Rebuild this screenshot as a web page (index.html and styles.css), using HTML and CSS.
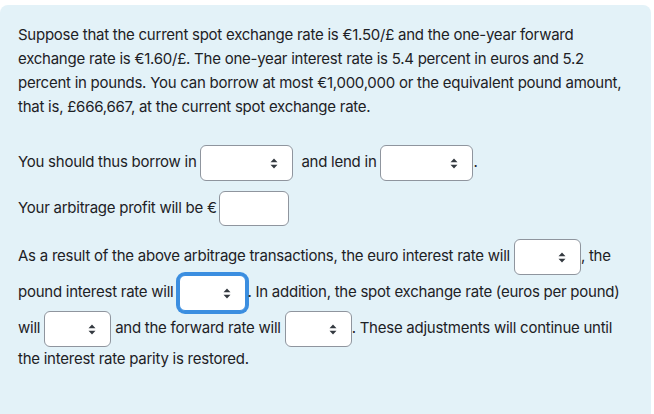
FILE: index.html
```html
<!DOCTYPE html>
<html>
<head>
<meta charset="utf-8">
<link rel="stylesheet" href="styles.css">
</head>
<body>
<div class="formulation">
  <p class="intro">Suppose that the current spot exchange rate is €1.50/£ and the one-year forward exchange rate is €1.60/£. The one-year interest rate is 5.4 percent in euros and 5.2 percent in pounds. You can borrow at most €1,000,000 or the equivalent pound amount, that is, £666,667, at the current spot exchange rate.</p>
  <p class="row row-borrow">You should thus borrow in <select class="sel sel-wide"><option></option></select>&nbsp; and lend in <select class="sel sel-wide"><option></option></select>.</p>
  <p class="row row-profit">Your arbitrage profit will be €<input class="num" type="text"></p>
  <p class="row row-result">As a result of the above arbitrage transactions, the euro interest rate will <select class="sel"><option></option></select>, the pound interest rate will <select class="sel focused"><option></option></select>. In addition, the spot exchange rate (euros per pound) will <select class="sel"><option></option></select> and the forward rate will <select class="sel"><option></option></select>. These adjustments will continue until the interest rate parity is restored.</p>
</div>
</body>
</html>
```
FILE: styles.css
```css
html, body {
  margin: 0;
  padding: 0;
  background: #ffffff;
}
body {
  font-family: Inter, "Noto Sans", "Liberation Sans", sans-serif;
  font-size: 15px;
  letter-spacing: -0.25px;
  color: #1d2125;
  width: 654px;
  height: 414px;
  overflow: hidden;
}
.formulation {
  margin: 5px 3px 0 0;
  height: 420px;
  box-sizing: border-box;
  padding: 18px 18px 0 18px;
  background: #e3f2f8;
  border-radius: 8px;
}
p {
  margin: 0;
}
.intro {
  line-height: 24px;
}
.row {
  line-height: 24px;
}
.row-borrow {
  margin-top: 26px;
}
.row-profit {
  margin-top: 10px;
}
.row-result {
  margin-top: 13px;
}
.sel {
  -webkit-appearance: none;
  appearance: none;
  box-sizing: border-box;
  width: 67px;
  height: 36px;
  margin: 0;
  padding: 0;
  vertical-align: middle;
  border: 1px solid #8f959e;
  border-radius: 6px;
  background-color: #ffffff;
  background-image: url("data:image/svg+xml;utf8,<svg xmlns='http://www.w3.org/2000/svg' width='8' height='11' viewBox='0 0 8 11'><path d='M4 0.5 L7.5 4.3 L0.5 4.3 Z M4 10.5 L7.5 6.7 L0.5 6.7 Z' fill='%23343a40'/></svg>");
  background-repeat: no-repeat;
  background-position: right 14px center;
  background-size: 8px 11px;
  font: inherit;
  color: inherit;
}
.sel-wide {
  width: 93px;
}
.focused {
  border-color: #3b8ee0;
  box-shadow: 0 0 0 3px #3b8ee0;
  outline: none;
  margin: 0 1px 0 2px;
}
.num {
  box-sizing: border-box;
  width: 70px;
  height: 35px;
  margin: 0 0 0 2px;
  padding: 0 6px;
  vertical-align: middle;
  border: 1px solid #8f959e;
  border-radius: 6px;
  background: #ffffff;
  font: inherit;
}
```
